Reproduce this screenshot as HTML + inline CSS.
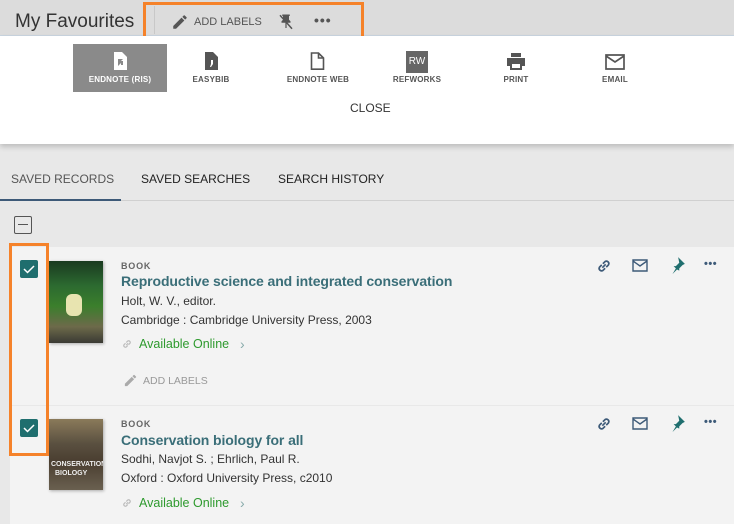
<!DOCTYPE html>
<html><head><meta charset="utf-8"><style>
*{margin:0;padding:0;box-sizing:border-box}
body{width:734px;height:524px;overflow:hidden;background:#e8e8e8;font-family:"Liberation Sans",sans-serif;position:relative}
.abs{position:absolute}
.hdr{left:0;top:0;width:734px;height:36px;background:#dcdcdc;border-bottom:1px solid #c9d5e0}
.panel{left:0;top:36px;width:734px;height:108px;background:#fff;box-shadow:0 3px 5px rgba(0,0,0,.18)}
.lbl{font-size:8px;font-weight:bold;color:#555;letter-spacing:.2px;text-align:center}
.tab{font-size:12px;top:172px}
.card{left:10px;width:724px;background:#f3f3f3}
.t{font-size:14px;font-weight:bold;color:#3a6e78;letter-spacing:-.1px}
.s{font-size:12px;color:#333}
.g{font-size:12.5px;color:#2e9a2e}
</style></head><body>
<div class="abs hdr"></div>
<div class="abs" style="left:15px;top:11px;font-size:19px;color:#333">My Favourites</div>
<div class="abs" style="left:154px;top:6px;width:1px;height:28px;background:#c8c8c8"></div>
<svg class="abs" style="left:171px;top:13px" width="18" height="18" viewBox="0 0 24 24"><path fill="#555" d="M3 17.25V21h3.75L17.8 9.94l-3.75-3.75L3 17.25zM20.7 7.04a1 1 0 000-1.41l-2.340-2.34a1 1 0 00-1.41 0l-1.83 1.83 3.75 3.75 1.83-1.83z"/></svg>
<div class="abs" style="left:194px;top:16px;font-size:11px;color:#555">ADD LABELS</div>
<svg class="abs" style="left:277px;top:13px" width="18" height="18" viewBox="0 0 24 24"><path fill="#555" d="M16 9V4h1V2H7v2h1v5l-2 2v2h5.2v7h1.6v-7H18v-2z"/><path stroke="#555" stroke-width="2" d="M4 3l16 18"/></svg>
<div class="abs" style="left:314px;top:12px;font-size:14px;color:#555;font-weight:bold;letter-spacing:1px">•••</div>
<div class="abs" style="left:143px;top:2px;width:221px;height:42px;border:3px solid #f5822a"></div>

<div class="abs panel"></div>
<div class="abs" style="left:73px;top:44px;width:94px;height:48px;background:#8a8a8a"></div>
<svg class="abs" style="left:112px;top:52px" width="16" height="18" viewBox="0 0 16 18"><path fill="#fff" d="M2 0h8l5 5v13H2z"/><path fill="#8a8a8a" d="M6 14l3-3v2h2V9H9l2-2H6z"/></svg>
<div class="abs lbl" style="left:73px;top:75px;width:94px;color:#fff">ENDNOTE (RIS)</div>
<svg class="abs" style="left:204px;top:52px" width="15" height="18" viewBox="0 0 15 18"><path fill="#555" d="M1 0h8l5 5v13H1z"/><path fill="#fff" d="M7 8h2v4l-2 3H6l1-3z"/></svg>
<div class="abs lbl" style="left:186px;top:75px;width:50px">EASYBIB</div>
<svg class="abs" style="left:310px;top:52px" width="15" height="18" viewBox="0 0 15 18"><path fill="none" stroke="#555" stroke-width="1.6" d="M1.5 1h7l5 5v11.2h-12z M8.5 1v5h5"/></svg>
<div class="abs lbl" style="left:280px;top:75px;width:76px">ENDNOTE WEB</div>
<div class="abs" style="left:406px;top:51px;width:22px;height:22px;background:#666;color:#fff;font-size:10px;text-align:center;line-height:22px">RW</div>
<div class="abs lbl" style="left:387px;top:75px;width:60px">REFWORKS</div>
<svg class="abs" style="left:506px;top:53px" width="20" height="18" viewBox="0 0 20 18"><path fill="#555" d="M5 0h10v4H5zM1 5h18v8h-3v4H4v-4H1z"/><path fill="#fff" d="M6 11h8v4H6z"/></svg>
<div class="abs lbl" style="left:496px;top:75px;width:40px">PRINT</div>
<svg class="abs" style="left:605px;top:54px" width="20" height="16" viewBox="0 0 20 16"><path fill="none" stroke="#555" stroke-width="1.7" d="M1 1h18v14H1z M1 2l9 6 9-6"/></svg>
<div class="abs lbl" style="left:595px;top:75px;width:40px">EMAIL</div>
<div class="abs" style="left:350px;top:101px;font-size:12px;color:#333">CLOSE</div>

<div class="abs tab" style="left:11px;color:#555">SAVED RECORDS</div>
<div class="abs tab" style="left:141px;color:#222">SAVED SEARCHES</div>
<div class="abs tab" style="left:278px;color:#222">SEARCH HISTORY</div>
<div class="abs" style="left:0;top:200px;width:734px;height:1px;background:#d0d0d0"></div>
<div class="abs" style="left:0;top:199px;width:121px;height:2px;background:#3d5a78"></div>
<div class="abs" style="left:14px;top:216px;width:18px;height:18px;border:1.3px solid #555;border-radius:2px"></div>
<div class="abs" style="left:18px;top:224px;width:10px;height:1.3px;background:#555"></div>

<div class="abs card" style="top:247px;height:158px"></div>
<div class="abs card" style="top:406px;height:118px"></div>

<div class="abs" style="left:20px;top:260px;width:18px;height:18px;background:#1f6e6e;border-radius:2px"></div>
<svg class="abs" style="left:20px;top:260px" width="18" height="18"><path d="M4 9l3.5 3.5L14 6" stroke="#fff" stroke-width="1.5" fill="none"/></svg>
<div class="abs" style="left:49px;top:261px;width:54px;height:82px;background:linear-gradient(180deg,#1a3a20,#2c6a30 30%,#3b7f2c 55%,#6d6a4a 80%,#3a3a34);box-shadow:1px 1px 3px rgba(0,0,0,.3)"></div>
<div class="abs" style="left:66px;top:294px;width:16px;height:22px;background:#e8e4b0;border-radius:6px"></div>
<div class="abs" style="left:121px;top:261px;font-size:9px;font-weight:bold;color:#666;letter-spacing:.8px">BOOK</div>
<div class="abs t" style="left:121px;top:273px">Reproductive science and integrated conservation</div>
<div class="abs s" style="left:121px;top:294px">Holt, W. V., editor.</div>
<div class="abs s" style="left:121px;top:313px">Cambridge : Cambridge University Press, 2003</div>
<svg class="abs" style="left:121px;top:338px" width="12" height="12" viewBox="0 0 16 16"><path fill="none" stroke="#bbb" stroke-width="1.6" d="M7 9.5l2.5-2.5M6 7L4 9a2.2 2.2 0 003 3l2-2M10 9l2-2a2.2 2.2 0 00-3-3L7 6"/></svg>
<div class="abs g" style="left:139px;top:337px">Available Online</div>
<div class="abs" style="left:240px;top:336px;font-size:14px;color:#8aa">›</div>
<svg class="abs" style="left:123px;top:373px" width="15" height="15" viewBox="0 0 24 24"><path fill="#aaa" d="M3 17.25V21h3.75L17.8 9.94l-3.75-3.75L3 17.25zM20.7 7.04a1 1 0 000-1.41l-2.34-2.34a1 1 0 00-1.41 0l-1.83 1.83 3.75 3.75 1.83-1.83z"/></svg>
<div class="abs" style="left:143px;top:375px;font-size:10.5px;color:#999">ADD LABELS</div>

<div class="abs" style="left:20px;top:419px;width:18px;height:18px;background:#1f6e6e;border-radius:2px"></div>
<svg class="abs" style="left:20px;top:419px" width="18" height="18"><path d="M4 9l3.5 3.5L14 6" stroke="#fff" stroke-width="1.5" fill="none"/></svg>
<div class="abs" style="left:49px;top:419px;width:54px;height:71px;background:linear-gradient(180deg,#8a7a5a,#5a5040 35%,#4a3e30 60%,#6a6050);box-shadow:1px 1px 3px rgba(0,0,0,.3);overflow:hidden"><div style="position:absolute;left:2px;top:42px;font-size:7px;font-weight:bold;color:#eee;white-space:nowrap">CONSERVATION</div><div style="position:absolute;left:6px;top:51px;font-size:7px;font-weight:bold;color:#eee">BIOLOGY</div></div>
<div class="abs" style="left:121px;top:419px;font-size:9px;font-weight:bold;color:#666;letter-spacing:.8px">BOOK</div>
<div class="abs t" style="left:121px;top:432px">Conservation biology for all</div>
<div class="abs s" style="left:121px;top:452px">Sodhi, Navjot S. ; Ehrlich, Paul R.</div>
<div class="abs s" style="left:121px;top:471px">Oxford : Oxford University Press, c2010</div>
<svg class="abs" style="left:121px;top:497px" width="12" height="12" viewBox="0 0 16 16"><path fill="none" stroke="#bbb" stroke-width="1.6" d="M7 9.5l2.5-2.5M6 7L4 9a2.2 2.2 0 003 3l2-2M10 9l2-2a2.2 2.2 0 00-3-3L7 6"/></svg>
<div class="abs g" style="left:139px;top:496px">Available Online</div>
<div class="abs" style="left:240px;top:495px;font-size:14px;color:#8aa">›</div>

<svg class="abs" style="left:595px;top:257px" width="18" height="18" viewBox="0 0 16 16"><path fill="none" stroke="#3d5a78" stroke-width="1.5" d="M6.5 9.5l3-3M6 7L4 9a2.2 2.2 0 003 3l2-2M10 9l2-2a2.2 2.2 0 00-3-3L7 6"/></svg>
<svg class="abs" style="left:632px;top:259px" width="16" height="13" viewBox="0 0 16 13"><path fill="none" stroke="#3d5a78" stroke-width="1.4" d="M1 1h14v11H1z M1 2l7 5 7-5"/></svg>
<svg class="abs" style="left:668px;top:256px" width="18" height="18" viewBox="0 0 16 16"><path fill="#1f6e6e" d="M9 1l6 6-2 1-3 3 0 2-2-1-4 4 3-5-2-2 2 0 3-3z"/></svg>
<div class="abs" style="left:704px;top:258px;font-size:11px;font-weight:bold;color:#3d5a78;letter-spacing:.5px">•••</div>
<svg class="abs" style="left:595px;top:415px" width="18" height="18" viewBox="0 0 16 16"><path fill="none" stroke="#3d5a78" stroke-width="1.5" d="M6.5 9.5l3-3M6 7L4 9a2.2 2.2 0 003 3l2-2M10 9l2-2a2.2 2.2 0 00-3-3L7 6"/></svg>
<svg class="abs" style="left:632px;top:417px" width="16" height="13" viewBox="0 0 16 13"><path fill="none" stroke="#3d5a78" stroke-width="1.4" d="M1 1h14v11H1z M1 2l7 5 7-5"/></svg>
<svg class="abs" style="left:668px;top:414px" width="18" height="18" viewBox="0 0 16 16"><path fill="#1f6e6e" d="M9 1l6 6-2 1-3 3 0 2-2-1-4 4 3-5-2-2 2 0 3-3z"/></svg>
<div class="abs" style="left:704px;top:416px;font-size:11px;font-weight:bold;color:#3d5a78;letter-spacing:.5px">•••</div>

<div class="abs" style="left:9px;top:243px;width:40px;height:213px;border:3px solid #f5822a"></div>
</body></html>
